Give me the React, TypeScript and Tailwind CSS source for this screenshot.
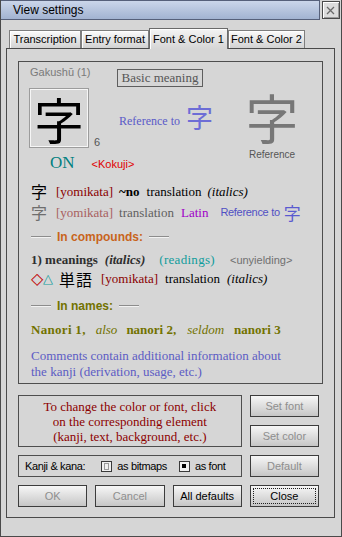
import React from "react";

const sans = "font-['Liberation_Sans',Arial,sans-serif]";
const serif = "font-['Liberation_Serif','Times_New_Roman',serif]";
const cjk = "font-['Noto_Sans_CJK_JP',sans-serif]";

function Btn({
  children,
  disabled,
  focus,
}: {
  children: React.ReactNode;
  disabled?: boolean;
  focus?: boolean;
}) {
  return (
    <div
      className={`relative h-[22px] border border-[#3c3c3c] bg-linear-to-b from-[#f7f7f7] to-[#c6c6c6] flex items-center justify-center text-[11px] ${
        disabled ? "text-[#8e8e8e]" : "text-black"
      }`}
    >
      {focus && <div className="absolute inset-[2px] border border-dotted border-[#202020]" />}
      {children}
    </div>
  );
}

function Tab({ w, label, active }: { w: string; label: string; active?: boolean }) {
  return (
    <div
      className={`${w} ${
        active
          ? "h-[21px] relative z-10 -mb-px bg-linear-to-b from-[#f4f4f4] to-[#d6d6d6] border-[#6a6a6a]"
          : "h-[18px] bg-linear-to-b from-[#fbfbfb] to-[#d2d2d2] border-[#7e7e7e]"
      } border border-b-0 shadow-[inset_1px_1px_0_#ffffff] flex items-center justify-center text-[11px] text-black whitespace-nowrap`}
    >
      {label}
    </div>
  );
}

function Heading({ label, color }: { label: string; color: string }) {
  return (
    <div className="flex items-center h-[18px]">
      <div className="w-[20px] h-[2px] border-t border-[#8c8c8c] border-b border-b-[#f2f2f2]" />
      <span className={`${sans} mx-[6px] font-bold text-[12px] ${color}`}>{label}</span>
      <div className="w-[20px] h-[2px] border-t border-[#8c8c8c] border-b border-b-[#f2f2f2]" />
    </div>
  );
}

export default function App() {
  return (
    <div className={`${sans} w-[342px] h-[537px] bg-[#d6d6d6] border-x border-b border-[#4a4a4a] flex flex-col overflow-hidden`}>
      {/* title bar */}
      <div className="flex h-[20px] shrink-0">
        <div className="flex-1 flex items-center pl-[12px] border-y border-r border-[#56607a] bg-linear-to-b from-[#cbd6ea] to-[#a2b3d1] text-[12px] text-black">
          View settings
        </div>
        <div className="w-[21px] flex items-center justify-center bg-[#d6d6d6]">
          <div className="w-[18px] h-[18px] border border-[#4a4a4a] bg-[#dcdcdc] shadow-[inset_1px_1px_0_#ffffff,inset_-1px_-1px_0_#9a9a9a] flex items-center justify-center">
            <svg width="9" height="9" viewBox="0 0 9 9">
              <path d="M1 1 L8 8 M8 1 L1 8" stroke="#6a6a6a" strokeWidth="1.3" />
            </svg>
          </div>
        </div>
      </div>

      {/* tabs */}
      <div className="flex items-end h-[28px] pl-[8px] shrink-0">
        <Tab w="w-[72px]" label="Transcription" />
        <Tab w="w-[68px]" label="Entry format" />
        <Tab w="w-[79px]" label="Font & Color 1" active />
        <Tab w="w-[77px]" label="Font & Color 2" />
      </div>

      {/* tab panel */}
      <div className="ml-[5px] mr-[6px] h-[470px] border border-[#4a4a4a] pt-[12px] pl-[11px] pr-[11px] flex flex-col shrink-0">
        {/* preview box */}
        <div className="h-[323px] border border-[#4e4e4e] flex flex-col">
          {/* header */}
          <div className="flex pl-[10px] pt-[3px]">
            <div className="w-[88px] flex flex-col">
              <div className="ml-[1px] h-[14px] leading-[14px] text-[11px] text-[#7a7a7a]">Gakushū (1)</div>
              <div className="mt-[9px] flex items-end">
                <div className="w-[60px] h-[60px] border border-[#9c9c9c] shadow-[inset_0_0_0_1px_#f6f6f6] flex items-center justify-center">
                  <span className={`${cjk} text-[50px] leading-none text-black`}>字</span>
                </div>
                <span className="ml-[5px] mb-[-2px] text-[11px] text-[#555555]">6</span>
              </div>
              <div className="mt-[6px] h-[17px] flex items-end">
                <span className={`${serif} ml-[21px] text-[17px] leading-[17px] text-[#008080]`}>ON</span>
                <span className="ml-[17px] text-[11px] leading-[14px] text-[#e00000]">&lt;Kokuji&gt;</span>
              </div>
            </div>
            <div className="w-[123px] flex flex-col">
              <div className={`${serif} mt-[4px] w-[86px] h-[18px] border border-[#5e5e5e] flex items-center justify-center text-[13px] text-[#555555]`}>
                Basic meaning
              </div>
              <div className="mt-[16px] ml-[2px] flex items-end">
                <span className={`${serif} text-[12px] leading-[16px] mb-[1px] text-[#5a5ac8]`}>Reference to</span>
                <span className={`${cjk} ml-[6px] text-[27px] leading-none text-[#6d6dd6]`}>字</span>
              </div>
            </div>
            <div className="w-[64px] flex flex-col items-center">
              <span className={`${cjk} mt-[25px] h-[54px] text-[53px] leading-[54px] text-[#777777]`}>字</span>
              <span className="mt-[5px] text-[10px] leading-[12px] text-[#555555]">Reference</span>
            </div>
          </div>

          {/* list */}
          <div className={`${serif} mt-[11px] pl-[12px] flex flex-col text-[13px]`}>
            <div className="h-[19px] flex items-center whitespace-nowrap">
              <span className={`${cjk} h-[17px] text-[16px] leading-[17px] text-black`}>字</span>
              <span className="ml-[9px] text-[#8a0000]">[yomikata]</span>
              <span className="ml-[6px] font-bold text-black">~no</span>
              <span className="ml-[7px] text-black">translation</span>
              <span className="ml-[6px] italic text-black">(italics)</span>
            </div>
            <div className="mt-[2px] h-[19px] flex items-center whitespace-nowrap">
              <span className={`${cjk} h-[17px] text-[16px] leading-[17px] text-[#6e6e6e]`}>字</span>
              <span className="ml-[9px] text-[#a86060]">[yomikata]</span>
              <span className="ml-[6px] text-[#606060]">translation</span>
              <span className="ml-[7px] text-[#a000c8]">Latin</span>
              <span className={`${sans} ml-[12px] text-[11px] tracking-[-0.3px] text-[#5050c4]`}>Reference to</span>
              <span className={`${cjk} ml-[4px] h-[17px] text-[17px] leading-[17px] text-[#5a5ad0]`}>字</span>
            </div>
            <div className="mt-[6px]">
              <Heading label="In compounds:" color="text-[#c8641c]" />
            </div>
            <div className="mt-[5px] h-[18px] flex items-center whitespace-nowrap">
              <span className="font-bold text-[#2e2e2e]">1)&nbsp;meanings</span>
              <span className="ml-[7px] font-bold italic text-[#2e2e2e]">(italics)</span>
              <span className="ml-[14px] text-[#109c9c] tracking-[0.3px]">(readings)</span>
              <span className={`${sans} ml-[15px] text-[11px] text-[#707070]`}>&lt;unyielding&gt;</span>
            </div>
            <div className="h-[20px] flex items-center whitespace-nowrap">
              <span className={`${sans} text-[16px] leading-[18px] text-[#c00000]`}>◇</span>
              <span className={`${sans} text-[13px] leading-[18px] text-[#109c9c]`}>△</span>
              <span className={`${cjk} ml-[6px] h-[18px] text-[16px] leading-[18px] text-black tracking-[1px]`}>単語</span>
              <span className="ml-[8px] text-[#8a0000]">[yomikata]</span>
              <span className="ml-[7px] text-black">translation</span>
              <span className="ml-[7px] italic text-black">(italics)</span>
            </div>
            <div className="mt-[8px]">
              <Heading label="In names:" color="text-[#727200]" />
            </div>
            <div className="mt-[6px] h-[18px] flex items-center whitespace-nowrap text-[#727200]">
              <span className="font-bold tracking-[0.3px]">Nanori 1,</span>
              <span className="ml-[10px] italic">also</span>
              <span className="ml-[9px] font-bold">nanori 2,</span>
              <span className="ml-[11px] italic">seldom</span>
              <span className="ml-[10px] font-bold">nanori 3</span>
            </div>
            <div className="mt-[9px] leading-[16px] text-[#5c5cc4]">
              <div>Comments contain additional information about</div>
              <div>the kanji (derivation, usage, etc.)</div>
            </div>
          </div>
        </div>

        {/* bottom controls */}
        <div className="mt-[11px] w-[301px] grid grid-cols-4 gap-x-[8px] gap-y-[8px]">
          <div className={`${serif} col-span-3 h-[52px] border border-[#4e4e4e] flex flex-col items-center justify-center text-[13px] leading-[15px] text-[#8c0000]`}>
            <div>To change the color or font, click</div>
            <div>on the corresponding element</div>
            <div>(kanji, text, background, etc.)</div>
          </div>
          <div className="flex flex-col gap-[8px]">
            <Btn disabled>Set font</Btn>
            <Btn disabled>Set color</Btn>
          </div>
          <div className="col-span-3 h-[22px] border border-[#4e4e4e] flex items-center pl-[6px] text-[11px] tracking-[-0.35px] text-black whitespace-nowrap">
            <span>Kanji &amp; kana:</span>
            <span className="ml-[16px] w-[11px] h-[11px] border border-[#3a3a3a] bg-[#f0f0f0] flex items-center justify-center">
              <span className="w-[5px] h-[7px] border border-[#9a9a9a]" />
            </span>
            <span className="ml-[5px]">as bitmaps</span>
            <span className="ml-[12px] w-[11px] h-[11px] border border-[#3a3a3a] bg-[#f0f0f0] flex items-center justify-center">
              <span className="w-[4px] h-[4px] bg-black" />
            </span>
            <span className="ml-[5px]">as font</span>
          </div>
          <Btn disabled>Default</Btn>
          <Btn disabled>OK</Btn>
          <Btn disabled>Cancel</Btn>
          <Btn>All defaults</Btn>
          <Btn focus>Close</Btn>
        </div>
      </div>
    </div>
  );
}
